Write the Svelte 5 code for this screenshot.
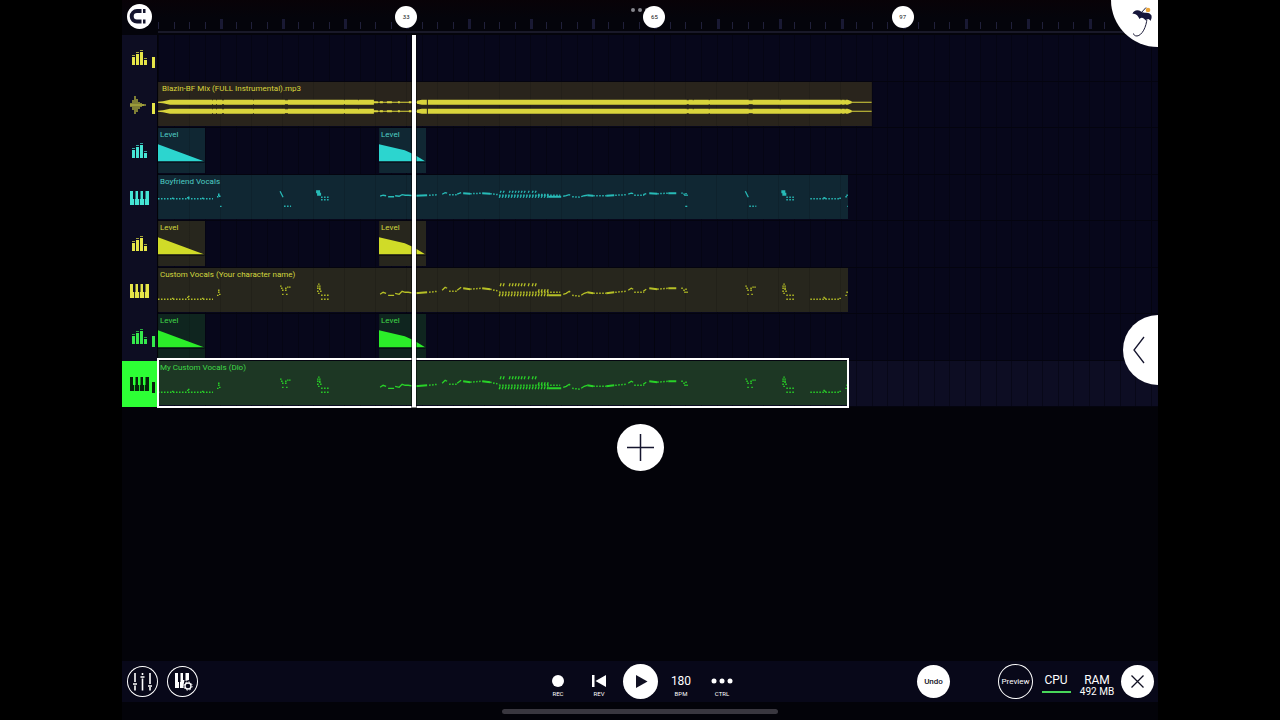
<script lang="ts">
  type ClipKind = 'audio' | 'level' | 'notes';

  interface Clip {
    kind: ClipKind;
    name: string;
    start: number;
    length: number;
    shape?: string;
    flat?: boolean;
  }

  interface Track {
    id: number;
    name: string;
    icon: 'faders' | 'wave' | 'keys';
    color: 'gold' | 'teal' | 'lime' | 'green';
    meter?: boolean;
    clips: Clip[];
  }

  // share of the timeline taken by one bar, in percent
  const BAR = 0.7757;

  const FALL = 'M0 16 L47 33 H0Z';
  const CURVE = 'M0 16 L26 22 L35 26 L47 33 H0Z';

  const levels = (): Clip[] => [
    { kind: 'level', name: 'Level', start: 0, length: 6, shape: FALL },
    { kind: 'level', name: 'Level', start: 28.5, length: 6, shape: CURVE }
  ];

  const tracks: Track[] = [
    { id: 1, name: 'Master level', icon: 'faders', color: 'gold', meter: true, clips: [] },
    {
      id: 2, name: 'Instrumental', icon: 'wave', color: 'gold', meter: true,
      clips: [{ kind: 'audio', name: 'Blazin-BF Mix (FULL Instrumental).mp3', start: 0, length: 92 }]
    },
    { id: 3, name: 'Boyfriend level', icon: 'faders', color: 'teal', clips: levels() },
    {
      id: 4, name: 'Boyfriend', icon: 'keys', color: 'teal',
      clips: [{ kind: 'notes', name: 'Boyfriend Vocals', start: 0, length: 89, flat: true }]
    },
    { id: 5, name: 'Custom level', icon: 'faders', color: 'lime', clips: levels() },
    {
      id: 6, name: 'Custom', icon: 'keys', color: 'lime',
      clips: [{ kind: 'notes', name: 'Custom Vocals (Your character name)', start: 0, length: 89 }]
    },
    { id: 7, name: 'My custom level', icon: 'faders', color: 'green', meter: true, clips: levels() },
    {
      id: 8, name: 'My custom', icon: 'keys', color: 'green', meter: true,
      clips: [{ kind: 'notes', name: 'My Custom Vocals (Dlo)', start: 0, length: 89 }]
    }
  ];

  const markers = [33, 65, 97];
  const ticks = Array.from({ length: 65 }, (_, i) => i * 2);

  // note runs inside a vocal clip, as x,y pairs
  const held = [
    [222, 26, 225, 24, 228, 25], [230, 27, 236, 27], [237, 25, 241, 26, 244, 23, 247, 24, 250, 24, 257, 25],
    [284, 22, 287, 19, 289, 20], [299, 22, 303, 19], [405, 26, 408, 25, 411, 23, 412, 24],
    [423, 27, 426, 25, 429, 24], [470, 22, 473, 20, 475, 21], [485, 23, 488, 21]
  ];
  const thick = [
    [257, 25, 269, 24], [305, 20, 312, 21], [324, 20, 332, 21], [390, 27, 403, 27],
    [429, 24, 435, 25], [448, 25, 456, 24], [491, 20, 499, 21], [510, 20, 518, 20]
  ];
  const dotted = [
    [0, 31, 55, 31], [271, 24, 280, 23], [291, 23, 299, 23], [312, 21, 324, 20], [332, 21, 341, 23],
    [341, 24, 402, 24], [414, 27, 423, 28], [435, 25, 448, 25], [457, 24, 468, 23],
    [476, 24, 486, 24], [499, 21, 510, 20], [652, 31, 682, 31]
  ];
  const chips = [
    [14, 30], [29, 29], [30, 28], [44, 30], [59, 27], [60, 24], [60, 22], [61, 26],
    [523, 20], [525, 22], [526, 24], [527, 21], [528, 24],
    [665, 29], [666, 30], [681, 30], [687, 27], [688, 24]
  ];
  const scattered = [
    [122, 18], [123, 20], [124, 22], [127, 20], [127, 22], [129, 19], [131, 19], [124, 26], [128, 26]
  ];
  const blockTop = [
    [159, 18], [160, 16], [161, 18], [159, 20], [161, 21], [162, 23], [159, 23], [160, 25], [161, 20]
  ];

  const trill: number[][] = [];
  for (const x of [342, 345, 351, 354, 357, 360, 363, 366, 370, 374, 377]) trill.push([x, 17]);
  for (let x = 341; x < 392; x += 3) trill.push([x, 27]);
  for (let x = 380; x < 392; x += 3) trill.push([x, 23]);

  let selected = $state(8);
  let playing = $state(false);
  let snap = $state(true);

  const fit = (y: number, flat = false) => (flat ? 8 + y * 0.5 : y);

  function runs(list: number[][], flat = false) {
    return list
      .map((run) => {
        let d = `M${run[0]} ${fit(run[1], flat)}`;
        for (let i = 2; i < run.length; i += 2) d += `L${run[i]} ${fit(run[i + 1], flat)}`;
        return d;
      })
      .join('');
  }

  function strokes(list: number[][], flat = false) {
    return list.map(([x, y]) => `M${x} ${fit(y, flat) + 1}l1 ${flat ? -2 : -3}`).join('');
  }

  function dots(list: number[][], flat = false, shift = 0) {
    return list.map(([x, y]) => `M${x + shift} ${fit(y, flat)}h1.500`).join('');
  }
</script>

{#snippet keysIcon()}
  <svg class="icon-keys" viewBox="0 0 19 14" aria-hidden="true">
    <path d="M0 0H3V8H4V14H0Z M5.500 0H8V8H9V14H4.800V8H5.500Z M10.500 0H13V8H14V14H9.800V8H10.500Z M15.500 0H19V14H14.800V8H15.500Z" fill="currentColor" />
  </svg>
{/snippet}

<div class="studio">
  <header class="ruler">
    <button
      type="button"
      class="snap"
      aria-label="Snap to grid"
      aria-pressed={snap}
      onclick={() => (snap = !snap)}
    >
      <svg viewBox="0 0 25 25" aria-hidden="true">
        <path d="M14.500 7H10a5.300 5.300 0 0 0 0 10.600H14.500" fill="none" stroke="#15152e" stroke-width="4" />
        <path d="M16 5h2.500v4H16zM16 15.600h2.500v4H16z" fill="#15152e" />
      </svg>
    </button>
    <div class="scale">
      {#each ticks as bar (bar)}
        <i class="tick" class:major={bar % 8 === 0 && bar > 0} style:left={`${bar * BAR}%`}></i>
      {/each}
      {#each markers as bar (bar)}
        <span class="marker" style:left={`${(bar - 1) * BAR}%`}>{bar}</span>
      {/each}
    </div>
    <div class="window-dots" aria-hidden="true"><i></i><i></i><i></i></div>
  </header>

  <main>
    <div class="playlist">
      <div class="heads">
        {#each tracks as track (track.id)}
          <button
            type="button"
            class="head {track.color}"
            class:active={selected === track.id}
            aria-label={track.name}
            onclick={() => (selected = track.id)}
          >
            {#if track.icon === 'faders'}
              <svg class="icon-faders" viewBox="0 0 16 16" aria-hidden="true">
                <path d="M0 7h3v8H0zM4 4h3v11H4zM8 2h3v13H8zM12 10h3v5h-3z" fill="currentColor" />
                <path d="M0 5h3v1H0zM4 2h3v1H4zM8 0h3v1H8zM12 8h3v1h-3z" fill="currentColor" opacity="0.7" />
              </svg>
            {:else if track.icon === 'wave'}
              <svg class="icon-wave" viewBox="0 0 16 20" aria-hidden="true">
                <path
                  d="M1 8v4M3 5v10M5 1v18M7 4v13M9 7v7M11 8v4M13 9v2M15 9.500v1"
                  stroke="currentColor"
                  stroke-width="1.500"
                  opacity="0.7"
                />
                <path d="M0 10h16" stroke="currentColor" opacity="0.6" />
              </svg>
            {:else}
              {@render keysIcon()}
            {/if}
            {#if track.meter}<i class="meter"></i>{/if}
          </button>
        {/each}
      </div>

      <div class="lanes">
        {#each tracks as track (track.id)}
          <div class="lane {track.color}" class:active={selected === track.id}>
            {#each track.clips as clip}
              <div
                class="clip {clip.kind}"
                class:chosen={selected === track.id && clip.kind === 'notes'}
                style:left={`${clip.start * BAR}%`}
                style:width={`${clip.length * BAR}%`}
              >
                {#if clip.kind === 'audio'}
                  <svg viewBox="0 0 714 44" preserveAspectRatio="none" aria-hidden="true">
                    {#each [20, 29] as y}
                      <g transform="translate(0 {y})">
                        <path
                          d="M0 -.5L5 -1L12 -2.500H216V2.500H12L5 1L0 .5Z M216 -1h4v2h-4z M220 -.5H259V.5H220Z M259 -1.500l5 -1h5v5h-5l-5 -1z M270 -2.500H690L694 -1V1L690 2.500H270Z M694 -.5H714V.5H694Z"
                          fill="currentColor"
                        />
                        <path
                          d="M54 -2.500h1M58 -2.500h1M64 -2.500h2M95 -2.500h1M127 -2.500h3M186 -2.500h1M200 -2.500h1M529 -2.500h2M535 -2.500h1M551 -2.500h1M591 -2.500h4M622 -2.500h1M683 -2.500h1M687 -2.500h1M54 2.500h1M58 2.500h1M64 2.500h2M95 2.500h1M127 2.500h3M186 2.500h1M529 2.500h2M551 2.500h1M591 2.500h4M683 2.500h1M687 2.500h1"
                          stroke="#29241c"
                        />
                        <path d="M222 0h3M229 0h5M240 0h2M251 0h3" stroke="currentColor" stroke-width="2" />
                      </g>
                    {/each}
                  </svg>
                {:else if clip.kind === 'level'}
                  <svg viewBox="0 0 47 44" preserveAspectRatio="none" aria-hidden="true">
                    <path d={clip.shape} fill="currentColor" />
                    <path d="M0 33.500H47" stroke="#03030d" />
                  </svg>
                {:else}
                  <svg class="notes-art" viewBox="0 0 690 44" preserveAspectRatio="none" aria-hidden="true">
                    <path d={runs(held, clip.flat)} />
                    <path class="thick" d={runs(thick, clip.flat)} />
                    <path class="dotted" d={runs(dotted, clip.flat)} />
                    <path d={strokes(trill, clip.flat)} />
                    <path d={dots(chips, clip.flat)} />
                    {#each [0, 465] as shift}
                      {#if clip.flat}
                        <path d="M{122 + shift} 16l3 6" />
                        <path class="dotted" d="M{126 + shift} 31h7" />
                        <path class="block" d="M{158 + shift} 16.500h4M{159 + shift} 19h4" />
                        <path class="dotted" d="M{163 + shift} 22h8M{163 + shift} 24.500h8" />
                        <path d="M{62 + (shift ? 627 : 0)} 31h1.500" />
                      {:else}
                        <path d={dots(scattered, false, shift)} />
                        <path d={dots(blockTop, false, shift)} />
                        <path class="dotted" d="M{163 + shift} 27h8M{163 + shift} 31h8" />
                      {/if}
                    {/each}
                    {#if clip.flat}<path d="M527 31h2" />{/if}
                  </svg>
                {/if}
                <span class="clip-name">{clip.name}</span>
              </div>
            {/each}
          </div>
        {/each}
        <div class="playhead"></div>
      </div>
    </div>

    <button type="button" class="add" aria-label="Add track">
      <svg viewBox="0 0 47 47" aria-hidden="true">
        <path d="M23.500 10V37M10 23.500H37" stroke="#15152e" stroke-width="1.500" />
      </svg>
    </button>
  </main>

  <footer>
    <div class="tools">
      <button type="button" class="ring" aria-label="Mixer">
        <svg viewBox="0 0 31 31" aria-hidden="true">
          <path
            d="M8 7v9M8 19.500v5M15.500 7v2M15.500 12.500v12M23 7v11M23 21v3.500M6 18h4M13.500 11h4M21 20h4"
            stroke="#fff"
            stroke-width="1.600"
          />
        </svg>
      </button>
      <button type="button" class="ring" aria-label="Instrument settings">
        <svg viewBox="0 0 31 31" aria-hidden="true">
          <path d="M8 7h3v9h1v6H8zM13.500 7h2.500v7h1.500l-1 5v3H13v-6h.5zM18.500 7H22v7l-3.500 1z" fill="#fff" />
          <circle cx="21" cy="20" r="3" fill="#080819" stroke="#fff" stroke-width="1.300" />
          <circle cx="21" cy="20" r="4.100" fill="none" stroke="#fff" stroke-dasharray="1.600 1.620" />
        </svg>
      </button>
    </div>

    <div class="transport">
      <button type="button">
        <svg viewBox="0 0 18 18" aria-hidden="true"><circle cx="9" cy="9" r="6" fill="#fff" /></svg>
        <small>REC</small>
      </button>
      <button type="button">
        <svg viewBox="0 0 18 18" aria-hidden="true"><path d="M2 3h2.500v12H2zM16 3v12L5.500 9z" fill="#fff" /></svg>
        <small>REV</small>
      </button>
      <button
        type="button"
        class="play"
        aria-label="Play"
        aria-pressed={playing}
        onclick={() => (playing = !playing)}
      >
        <svg viewBox="0 0 35 35" aria-hidden="true"><path d="M13 11v13l11.500 -6.500z" fill="#101022" /></svg>
      </button>
      <button type="button">
        <strong>180</strong>
        <small>BPM</small>
      </button>
      <button type="button">
        <svg class="wide" viewBox="0 0 22 18" aria-hidden="true">
          <g fill="#fff"><circle cx="3" cy="9" r="2.500" /><circle cx="11" cy="9" r="2.500" /><circle cx="19" cy="9" r="2.500" /></g>
        </svg>
        <small>CTRL</small>
      </button>
    </div>

    <div class="status">
      <button type="button" class="solid undo">Undo</button>
      <button type="button" class="ring preview">Preview</button>
      <div class="stat cpu">CPU<i></i></div>
      <div class="stat ram">RAM<small>492 MB</small></div>
      <button type="button" class="solid" aria-label="Close">
        <svg viewBox="0 0 33 33" aria-hidden="true">
          <path d="M10.500 10.500L22.500 22.500M22.500 10.500L10.500 22.500" stroke="#101022" stroke-width="1.300" />
        </svg>
      </button>
    </div>
  </footer>

  <div class="home"><i></i></div>

  <button type="button" class="corner" aria-label="Main menu">
    <svg viewBox="0 0 47 47" aria-hidden="true">
      <path d="M35 7.500L30 13M36 18C35.500 27 31 35.500 26 36C23.500 36 22.500 34.500 22.500 33.500" fill="none" stroke="#1b1b38" />
      <path
        d="M21.500 14C22.500 10 27 9.500 30 11.500C33 14 38 11 40.500 15.500C41 18 40 19.500 39.500 21C38 18.500 35.500 18.500 34.500 20.500C32.500 17.500 30.500 17 28.500 19C27 15.500 24.500 13 21.500 14Z"
        fill="#16163a"
      />
      <circle cx="37" cy="10" r="2.300" fill="#e9a43a" />
    </svg>
  </button>

  <button type="button" class="handle" aria-label="Open side panel">
    <svg viewBox="0 0 35 70" aria-hidden="true">
      <path d="M21 22L11 35L21 48" fill="none" stroke="#15152e" stroke-width="1.300" />
    </svg>
  </button>
</div>

<style>
  :global(body) {
    background: #000;
  }

  .studio {
    position: relative;
    display: flex;
    flex-direction: column;
    min-height: 100vh;
    margin: 0 122px;
    background: #030309;
    color: #fff;
    font-family: Roboto, 'Liberation Sans', sans-serif;
    overflow: hidden;
  }

  button {
    margin: 0;
    padding: 0;
    border: 0;
    background: none;
    color: inherit;
    font: inherit;
    cursor: pointer;
  }

  svg {
    display: block;
  }

  .ruler {
    display: flex;
    height: 35px;
    background: linear-gradient(#080207, #04040b 50%);
  }

  .snap {
    width: 25px;
    height: 25px;
    margin: 4px 6px 0 5px;
    border-radius: 50%;
    background: #fff;
  }

  .scale {
    position: relative;
    flex: 1;
    height: 31px;
    border-bottom: 2px solid #191929;
  }

  .tick {
    position: absolute;
    bottom: 2px;
    width: 1px;
    height: 7px;
    background: #20203a;
  }

  .tick.major {
    width: 3px;
    height: 10px;
    background: #191933;
  }

  .marker {
    position: absolute;
    top: 6px;
    width: 22px;
    height: 22px;
    margin-left: -11px;
    border-radius: 50%;
    background: #fff;
    color: #111;
    font-size: 6px;
    line-height: 22px;
    text-align: center;
    z-index: 2;
  }

  .window-dots {
    position: absolute;
    top: 8px;
    left: 50%;
    display: flex;
    gap: 3px;
    transform: translateX(-50%);
  }

  .window-dots i {
    width: 4px;
    height: 4px;
    border-radius: 50%;
    background: #85858c;
  }

  main {
    flex: 1;
  }

  .playlist {
    display: flex;
    height: 372px;
  }

  .heads,
  .lanes {
    display: grid;
    grid-template-rows: repeat(8, 1fr);
  }

  .heads {
    width: 36px;
  }

  .head {
    position: relative;
    display: grid;
    place-items: center;
    margin-right: 1px;
    background: #0d0d22;
  }

  .head.active {
    background: #2dff35;
    color: #07230c;
  }

  .gold {
    --fill: #29241c;
    color: #d9d43c;
  }

  .teal {
    --fill: #102733;
    color: #2cd5cf;
  }

  .lime {
    --fill: #27261d;
    color: #d0db28;
  }

  .green {
    --fill: #0f251f;
    color: #2bee29;
  }

  .head.teal {
    color: #45e5d5;
  }

  .head.lime,
  .head.gold {
    color: #e5e548;
  }

  .head.green:not(.active) {
    color: #35e84c;
  }

  .icon-faders {
    width: 16px;
    height: 16px;
  }

  .icon-wave {
    width: 16px;
    height: 20px;
    margin-right: 3px;
  }

  .icon-keys {
    width: 19px;
    height: 14px;
  }

  .meter {
    position: absolute;
    right: 2px;
    bottom: 14px;
    width: 3px;
    height: 11px;
    background: currentColor;
  }

  .lanes {
    position: relative;
    flex: 1;
    background: #07071a;
  }

  .lane {
    position: relative;
    border-bottom: 1px solid #04040f;
    background:
      repeating-linear-gradient(to right, #04040f 0 1px, transparent 1px 24.822%),
      repeating-linear-gradient(to right, #050514 0 1px, transparent 1px 1.5514%),
      #07071b;
  }

  .lane.active {
    background:
      repeating-linear-gradient(to right, #080818 0 1px, transparent 1px 1.5514%),
      #0d0d23;
  }

  .clip {
    position: absolute;
    top: 0;
    bottom: 1px;
    background:
      repeating-linear-gradient(to right, rgba(0, 0, 0, 0.12) 0 1px, transparent 1px 31px),
      var(--fill);
  }

  .clip svg {
    width: 100%;
    height: 100%;
  }

  .clip.chosen {
    background: #1d3724;
    z-index: 1;
  }

  /* selection frame reaches a little past the clip */
  .clip.chosen::after {
    content: '';
    position: absolute;
    inset: -3px -1px -3px -1px;
    border: 2px solid #fff;
  }

  .clip-name {
    position: absolute;
    top: 2px;
    left: 2px;
    font-size: 8px;
    line-height: 10px;
    white-space: nowrap;
  }

  .audio .clip-name {
    left: 4px;
  }

  .teal .clip-name {
    color: #4fcfc4;
  }

  .lime .clip-name {
    color: #d3d83f;
  }

  .green .clip-name {
    color: #40d848;
  }

  .notes-art {
    fill: none;
    stroke: currentColor;
    stroke-width: 1.3;
    opacity: 0.85;
  }

  .thick {
    stroke-width: 2;
  }

  .block {
    stroke-width: 3;
  }

  .dotted {
    stroke-width: 1.5;
    stroke-dasharray: 1.5 1.5;
  }

  .playhead {
    position: absolute;
    top: 0;
    bottom: 0;
    left: 25.6%;
    width: 4px;
    margin-left: -2px;
    background: #fff;
    box-shadow: 0 0 0 1px rgba(0, 0, 0, 0.5);
    z-index: 3;
  }

  .add {
    display: block;
    width: 47px;
    height: 47px;
    margin: 17px auto 0;
    border-radius: 50%;
    background: #fff;
  }

  footer {
    display: grid;
    grid-template-columns: 1fr auto 1fr;
    align-items: center;
    height: 41px;
    background: #080819;
  }

  .tools {
    display: flex;
    gap: 9px;
    padding-left: 5px;
  }

  .ring {
    width: 31px;
    height: 31px;
    border-radius: 50%;
    background: #080819;
    box-shadow: inset 0 0 0 1px #fff;
  }

  .transport {
    display: flex;
    align-items: center;
  }

  .transport button {
    display: flex;
    flex-direction: column;
    align-items: center;
    width: 41px;
    height: 35px;
  }

  .transport svg {
    width: 18px;
    height: 18px;
    margin-top: 8px;
  }

  .transport svg.wide {
    width: 22px;
  }

  .transport strong {
    height: 18px;
    margin-top: 8px;
    font-size: 12px;
    font-weight: 400;
    line-height: 18px;
  }

  .transport small {
    font-size: 6px;
    line-height: 7px;
  }

  .transport .play {
    width: 35px;
    margin: 0 3px;
    border-radius: 50%;
    background: #fff;
  }

  .play svg {
    width: 35px;
    height: 35px;
    margin: 0;
  }

  .status {
    display: flex;
    justify-content: flex-end;
    align-items: center;
    gap: 6px;
    padding-right: 4px;
  }

  .solid {
    width: 33px;
    height: 33px;
    border-radius: 50%;
    background: #fff;
    color: #111122;
  }

  .undo {
    margin-right: 42px;
    font-size: 8px;
    font-weight: 500;
  }

  .preview {
    width: 35px;
    height: 35px;
    font-size: 8px;
  }

  .stat {
    display: flex;
    flex-direction: column;
    align-items: center;
    box-sizing: border-box;
    height: 35px;
    padding-top: 9px;
    font-size: 12px;
    line-height: 14px;
    white-space: nowrap;
  }

  .stat small {
    font-size: 10px;
    line-height: 10px;
  }

  .cpu {
    width: 34px;
  }

  .cpu i {
    width: 29px;
    height: 2px;
    margin-top: 4px;
    background: #48d85a;
  }

  .ram {
    width: 36px;
  }

  .home {
    display: flex;
    justify-content: center;
    align-items: center;
    height: 18px;
  }

  .home i {
    width: 276px;
    height: 5px;
    border-radius: 3px;
    background: #39373f;
  }

  .corner {
    position: absolute;
    top: 0;
    right: 0;
    width: 47px;
    height: 47px;
    border-bottom-left-radius: 100%;
    background: #fff;
    z-index: 4;
  }

  .handle {
    position: absolute;
    top: 315px;
    right: 0;
    width: 35px;
    height: 70px;
    border-radius: 35px 0 0 35px;
    background: #fff;
    z-index: 4;
  }
</style>
